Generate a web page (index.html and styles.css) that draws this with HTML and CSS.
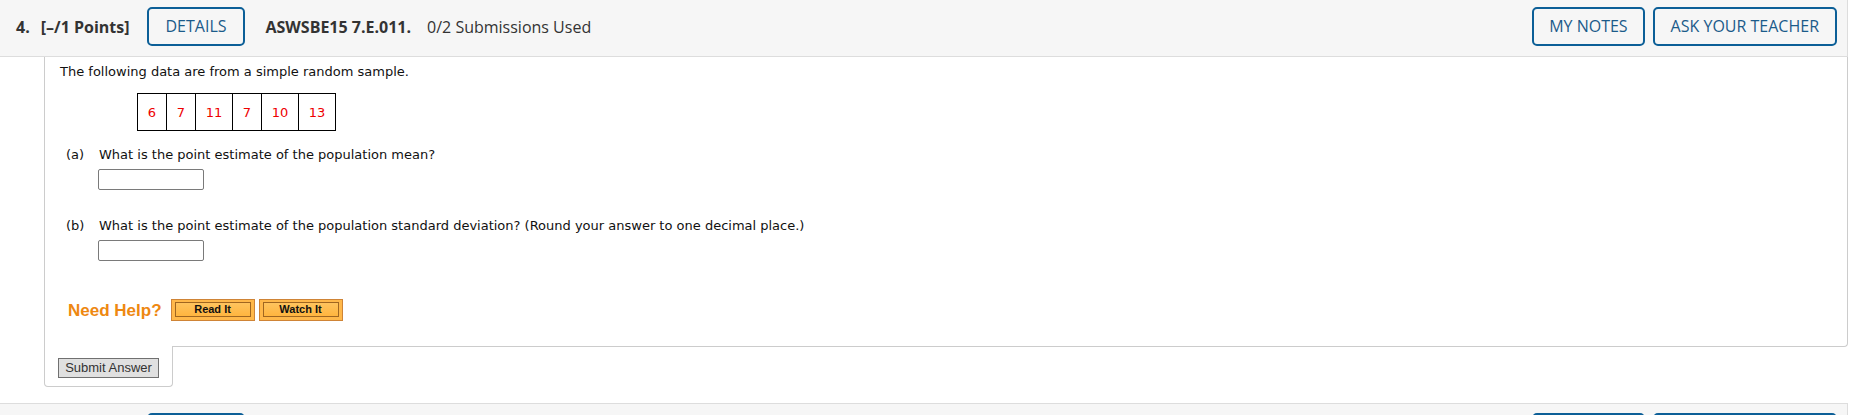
FILE: index.html
```html
<!DOCTYPE html>
<html lang="en">
<head>
<meta charset="utf-8">
<title>Question 4</title>
<link rel="stylesheet" href="styles.css">
</head>
<body>
<div class="page">
  <section class="question">
    <header class="q-head">
      <span class="q-num">4.</span>
      <span class="q-points">[&ndash;/1 Points]</span>
      <button class="btn-outline btn-details">DETAILS</button>
      <span class="q-id">ASWSBE15 7.E.011.</span>
      <span class="q-subs">0/2 Submissions Used</span>
      <div class="q-actions">
        <button class="btn-outline btn-notes">MY NOTES</button>
        <button class="btn-outline btn-ask">ASK YOUR TEACHER</button>
      </div>
    </header>
    <div class="q-body">
      <p class="intro">The following data are from a simple random sample.</p>
      <div class="data-row">
        <span class="cell">6</span>
        <span class="cell">7</span>
        <span class="cell wide">11</span>
        <span class="cell">7</span>
        <span class="cell wide">10</span>
        <span class="cell wide last">13</span>
      </div>
      <div class="part part-a">
        <span class="part-label">(a)</span>
        <div class="part-main">
          <p class="part-text">What is the point estimate of the population mean?</p>
          <input class="answer" type="text">
        </div>
      </div>
      <div class="part part-b">
        <span class="part-label">(b)</span>
        <div class="part-main">
          <p class="part-text">What is the point estimate of the population standard deviation? (Round your answer to one decimal place.)</p>
          <input class="answer" type="text">
        </div>
      </div>
      <div class="help">
        <span class="help-label">Need Help?</span>
        <button class="help-btn"><span>Read It</span></button>
        <button class="help-btn"><span>Watch It</span></button>
      </div>
    </div>
    <div class="submit-tab">
      <button class="submit-btn">Submit Answer</button>
    </div>
  </section>
  <section class="question">
    <header class="q-head">
      <span class="q-num">5.</span>
      <span class="q-points">[&ndash;/1 Points]</span>
      <button class="btn-outline btn-details">DETAILS</button>
      <div class="q-actions">
        <button class="btn-outline btn-notes">MY NOTES</button>
        <button class="btn-outline btn-ask">ASK YOUR TEACHER</button>
      </div>
    </header>
  </section>
</div>
</body>
</html>
```
FILE: styles.css
```css
html, body {
  margin: 0;
  padding: 0;
  background: #fff;
}

.page {
  width: 1848px;
  margin-top: -3px;
}

.question {
  margin-bottom: 16px;
}

.q-head {
  display: flex;
  align-items: center;
  background: #f6f6f6;
  border: 1px solid #dddddd;
  border-left: none;
  padding: 9px 10px 10px 16px;
  font-family: "Open Sans", "Noto Sans", sans-serif;
  font-size: 16px;
  color: #333;
}

.q-num {
  font-weight: 700;
  margin-right: 11px;
}

.q-points {
  font-weight: 700;
  margin-right: 18px;
}

.q-id {
  font-weight: 700;
  margin-right: 16px;
}

.q-subs {
  font-weight: 400;
}

.btn-outline {
  font-family: "Open Sans", "Noto Sans", sans-serif;
  font-size: 16px;
  color: #1b5b8a;
  background: transparent;
  border: 2px solid #0c5f97;
  border-radius: 5px;
  height: 39px;
  box-sizing: border-box;
  padding: 0 16px;
  margin: 0;
  line-height: 35px;
}

.btn-details {
  margin-right: 21px;
}

.btn-notes {
  padding: 0 15px;
}

.q-actions {
  margin-left: auto;
  display: flex;
  gap: 8px;
}

.q-body {
  margin-left: 44px;
  border-left: 1px solid #cccccc;
  border-right: 1px solid #cccccc;
  border-bottom: 1px solid #cccccc;
  border-bottom-right-radius: 4px;
  padding: 7px 15px 25px 15px;
  font-family: "DejaVu Sans", Verdana, sans-serif;
  font-size: 13px;
  line-height: 15px;
  color: #111;
}

.intro {
  margin: 0 0 14px 0;
}

.data-row {
  display: inline-flex;
  margin-left: 77px;
  border: 1px solid #000;
  height: 36px;
}

.cell {
  width: 28px;
  border-right: 1px solid #000;
  display: flex;
  align-items: center;
  justify-content: center;
  color: #ee0000;
}

.cell.wide {
  width: 36px;
}

.cell.last {
  border-right: none;
}

.part {
  display: flex;
  margin-left: 6px;
}

.part-a {
  margin-top: 16px;
}

.part-b {
  margin-top: 28px;
}

.part-label {
  width: 33px;
  flex: none;
}

.part-text {
  margin: 0;
}

.answer {
  display: block;
  margin: 7px 0 0 -1px;
  width: 106px;
  height: 21px;
  box-sizing: border-box;
  border: 1px solid #7a7a7a;
  border-radius: 2px;
  padding: 0 3px;
  background: #fff;
}

.help {
  display: flex;
  align-items: center;
  margin-top: 38px;
  margin-left: 8px;
}

.help-label {
  font-family: "Liberation Sans", Arial, sans-serif;
  font-weight: 700;
  font-size: 17px;
  color: #ee8811;
  margin-right: 9px;
}

.help-btn {
  width: 84px;
  height: 22px;
  box-sizing: border-box;
  border: 1px solid #cf8436;
  background: #ffb84a;
  padding: 2px 3px 3px 3px;
  margin: 0 4px 0 0;
  cursor: pointer;
}

.help-btn span {
  display: block;
  height: 100%;
  box-sizing: border-box;
  border: 1px solid #a06620;
  background: linear-gradient(#ffc45e, #ffb53f);
  font-family: "Liberation Sans", Arial, sans-serif;
  font-weight: 700;
  font-size: 11px;
  line-height: 13px;
  color: #111;
  text-align: center;
}

.submit-tab {
  margin-left: 44px;
  margin-top: -1px;
  width: 129px;
  box-sizing: border-box;
  background: #fff;
  border: 1px solid #cccccc;
  border-top: none;
  border-radius: 0 0 4px 4px;
  padding: 12px 0 8px 13px;
  position: relative;
}

.submit-btn {
  display: block;
  width: 101px;
  height: 20px;
  box-sizing: border-box;
  margin: 0;
  padding: 0;
  background: #e0e0e0;
  border: 1px solid #707070;
  font-family: "Liberation Sans", Arial, sans-serif;
  font-size: 13px;
  line-height: 18px;
  color: #333;
}
```
